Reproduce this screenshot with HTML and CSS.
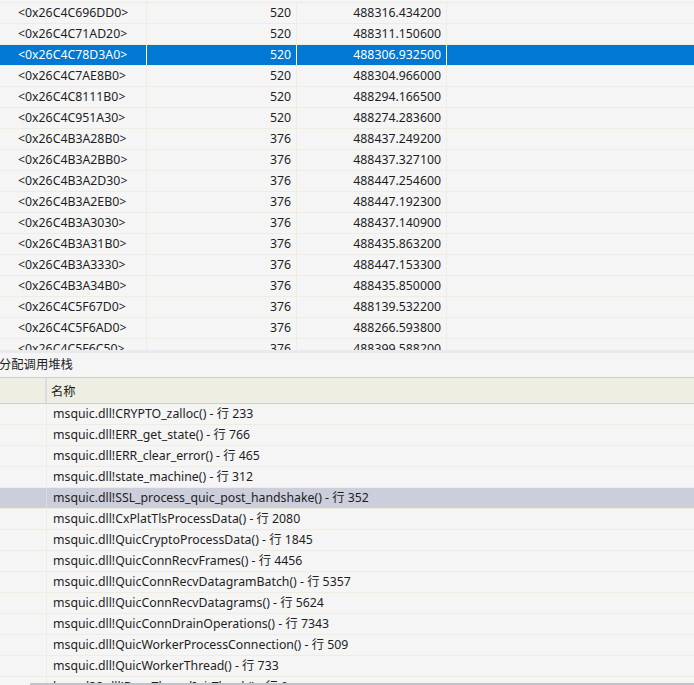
FILE: index.html
```html
<!DOCTYPE html>
<html>
<head>
<meta charset="utf-8">
<link rel="stylesheet" href="styles.css">
</head>
<body>
<div class="top-panel">
  <div class="grid">
    <div class="spacer"></div>
    <div class="row"><div class="c1">&lt;0x26C4C696DD0&gt;</div><div class="c2">520</div><div class="c3">488316.434200</div><div class="c4"></div></div>
    <div class="row"><div class="c1">&lt;0x26C4C71AD20&gt;</div><div class="c2">520</div><div class="c3">488311.150600</div><div class="c4"></div></div>
    <div class="row sel"><div class="c1">&lt;0x26C4C78D3A0&gt;</div><div class="c2">520</div><div class="c3">488306.932500</div><div class="c4"></div></div>
    <div class="row"><div class="c1">&lt;0x26C4C7AE8B0&gt;</div><div class="c2">520</div><div class="c3">488304.966000</div><div class="c4"></div></div>
    <div class="row"><div class="c1">&lt;0x26C4C8111B0&gt;</div><div class="c2">520</div><div class="c3">488294.166500</div><div class="c4"></div></div>
    <div class="row"><div class="c1">&lt;0x26C4C951A30&gt;</div><div class="c2">520</div><div class="c3">488274.283600</div><div class="c4"></div></div>
    <div class="row"><div class="c1">&lt;0x26C4B3A28B0&gt;</div><div class="c2">376</div><div class="c3">488437.249200</div><div class="c4"></div></div>
    <div class="row"><div class="c1">&lt;0x26C4B3A2BB0&gt;</div><div class="c2">376</div><div class="c3">488437.327100</div><div class="c4"></div></div>
    <div class="row"><div class="c1">&lt;0x26C4B3A2D30&gt;</div><div class="c2">376</div><div class="c3">488447.254600</div><div class="c4"></div></div>
    <div class="row"><div class="c1">&lt;0x26C4B3A2EB0&gt;</div><div class="c2">376</div><div class="c3">488447.192300</div><div class="c4"></div></div>
    <div class="row"><div class="c1">&lt;0x26C4B3A3030&gt;</div><div class="c2">376</div><div class="c3">488437.140900</div><div class="c4"></div></div>
    <div class="row"><div class="c1">&lt;0x26C4B3A31B0&gt;</div><div class="c2">376</div><div class="c3">488435.863200</div><div class="c4"></div></div>
    <div class="row"><div class="c1">&lt;0x26C4B3A3330&gt;</div><div class="c2">376</div><div class="c3">488447.153300</div><div class="c4"></div></div>
    <div class="row"><div class="c1">&lt;0x26C4B3A34B0&gt;</div><div class="c2">376</div><div class="c3">488435.850000</div><div class="c4"></div></div>
    <div class="row"><div class="c1">&lt;0x26C4C5F67D0&gt;</div><div class="c2">376</div><div class="c3">488139.532200</div><div class="c4"></div></div>
    <div class="row"><div class="c1">&lt;0x26C4C5F6AD0&gt;</div><div class="c2">376</div><div class="c3">488266.593800</div><div class="c4"></div></div>
    <div class="row"><div class="c1">&lt;0x26C4C5F6C50&gt;</div><div class="c2">376</div><div class="c3">488399.588200</div><div class="c4"></div></div>
  </div>
</div>
<div class="splitter"></div>
<div class="title">分配调用堆栈</div>
<div class="bottom-panel">
  <div class="head"><div class="b1"></div><div class="b2">名称</div></div>
  <div class="list">
    <div class="brow"><div class="b1"></div><div class="b2">msquic.dll!CRYPTO_zalloc() - 行 233</div></div>
    <div class="brow"><div class="b1"></div><div class="b2">msquic.dll!ERR_get_state() - 行 766</div></div>
    <div class="brow"><div class="b1"></div><div class="b2">msquic.dll!ERR_clear_error() - 行 465</div></div>
    <div class="brow"><div class="b1"></div><div class="b2">msquic.dll!state_machine() - 行 312</div></div>
    <div class="brow bsel"><div class="b1"></div><div class="b2">msquic.dll!SSL_process_quic_post_handshake() - 行 352</div></div>
    <div class="brow"><div class="b1"></div><div class="b2">msquic.dll!CxPlatTlsProcessData() - 行 2080</div></div>
    <div class="brow"><div class="b1"></div><div class="b2">msquic.dll!QuicCryptoProcessData() - 行 1845</div></div>
    <div class="brow"><div class="b1"></div><div class="b2">msquic.dll!QuicConnRecvFrames() - 行 4456</div></div>
    <div class="brow"><div class="b1"></div><div class="b2">msquic.dll!QuicConnRecvDatagramBatch() - 行 5357</div></div>
    <div class="brow"><div class="b1"></div><div class="b2">msquic.dll!QuicConnRecvDatagrams() - 行 5624</div></div>
    <div class="brow"><div class="b1"></div><div class="b2">msquic.dll!QuicConnDrainOperations() - 行 7343</div></div>
    <div class="brow"><div class="b1"></div><div class="b2">msquic.dll!QuicWorkerProcessConnection() - 行 509</div></div>
    <div class="brow"><div class="b1"></div><div class="b2">msquic.dll!QuicWorkerThread() - 行 733</div></div>
    <div class="brow"><div class="b1"></div><div class="b2">kernel32.dll!BaseThreadInitThunk() - 行 0</div></div>
  </div>
  <div class="hscroll"><div class="thumb"></div></div>
</div>
</body>
</html>
```

FILE: styles.css
```css
html, body {
  margin: 0;
  padding: 0;
  background: #f5f5f5;
  overflow: hidden;
}
body {
  width: 694px;
  height: 685px;
  font-family: "Noto Sans", "Noto Sans CJK SC", sans-serif;
  font-size: 12.3px;
  color: #1e1e1e;
}
.top-panel {
  height: 350px;
  overflow: hidden;
}
.spacer {
  height: 2px;
  border-bottom: 1px solid #efede0;
  display: flex;
}
.row {
  display: flex;
  height: 20px;
  border-bottom: 1px solid #efede0;
  line-height: 20px;
  white-space: nowrap;
}
.row > div {
  border-right: 1px solid #efede0;
  box-sizing: border-box;
  height: 20px;
}
.c1 { width: 147px; padding-left: 18px; }
.c2 { width: 150px; text-align: right; padding-right: 5px; }
.c3 { width: 150px; text-align: right; padding-right: 5px; }
.row > .c4 { flex: 1; border-right: none; }
.row.sel {
  background: #0078d4;
  color: #ffffff;
}
.row.sel > div { border-right-color: #ffffff; }
.row.sel > .c4 { border-right: none; }
.splitter {
  height: 3px;
  background: #eaeaee;
}
.title {
  height: 24px;
  line-height: 23px;
  margin-left: -1px;
  white-space: nowrap;
}
.bottom-panel {
  display: flex;
  flex-direction: column;
}
.head {
  display: flex;
  height: 25px;
  line-height: 27px;
  background: #efeee2;
  border-top: 1px solid #cccedb;
  border-bottom: 1px solid #cccedb;
}
.head .b1 {
  width: 47px;
  border-right: 2px solid #dcdce6;
  box-sizing: border-box;
}
.head .b2 { padding-left: 4px; }
.list {
  height: 279px;
  overflow: hidden;
}
.brow {
  display: flex;
  height: 20px;
  line-height: 20px;
  border-bottom: 1px solid #efede0;
  white-space: nowrap;
}
.brow .b1 {
  width: 47px;
  border-right: 1px solid #efede0;
  box-sizing: border-box;
}
.brow .b2 { padding-left: 6px; }
.brow.bsel { background: #cccedb; }
.brow.bsel .b1 { border-right-color: #dadbe5; }
.hscroll {
  height: 2px;
  padding-left: 30px;
}
.thumb {
  height: 2px;
  background: #c2c3c9;
}
```
